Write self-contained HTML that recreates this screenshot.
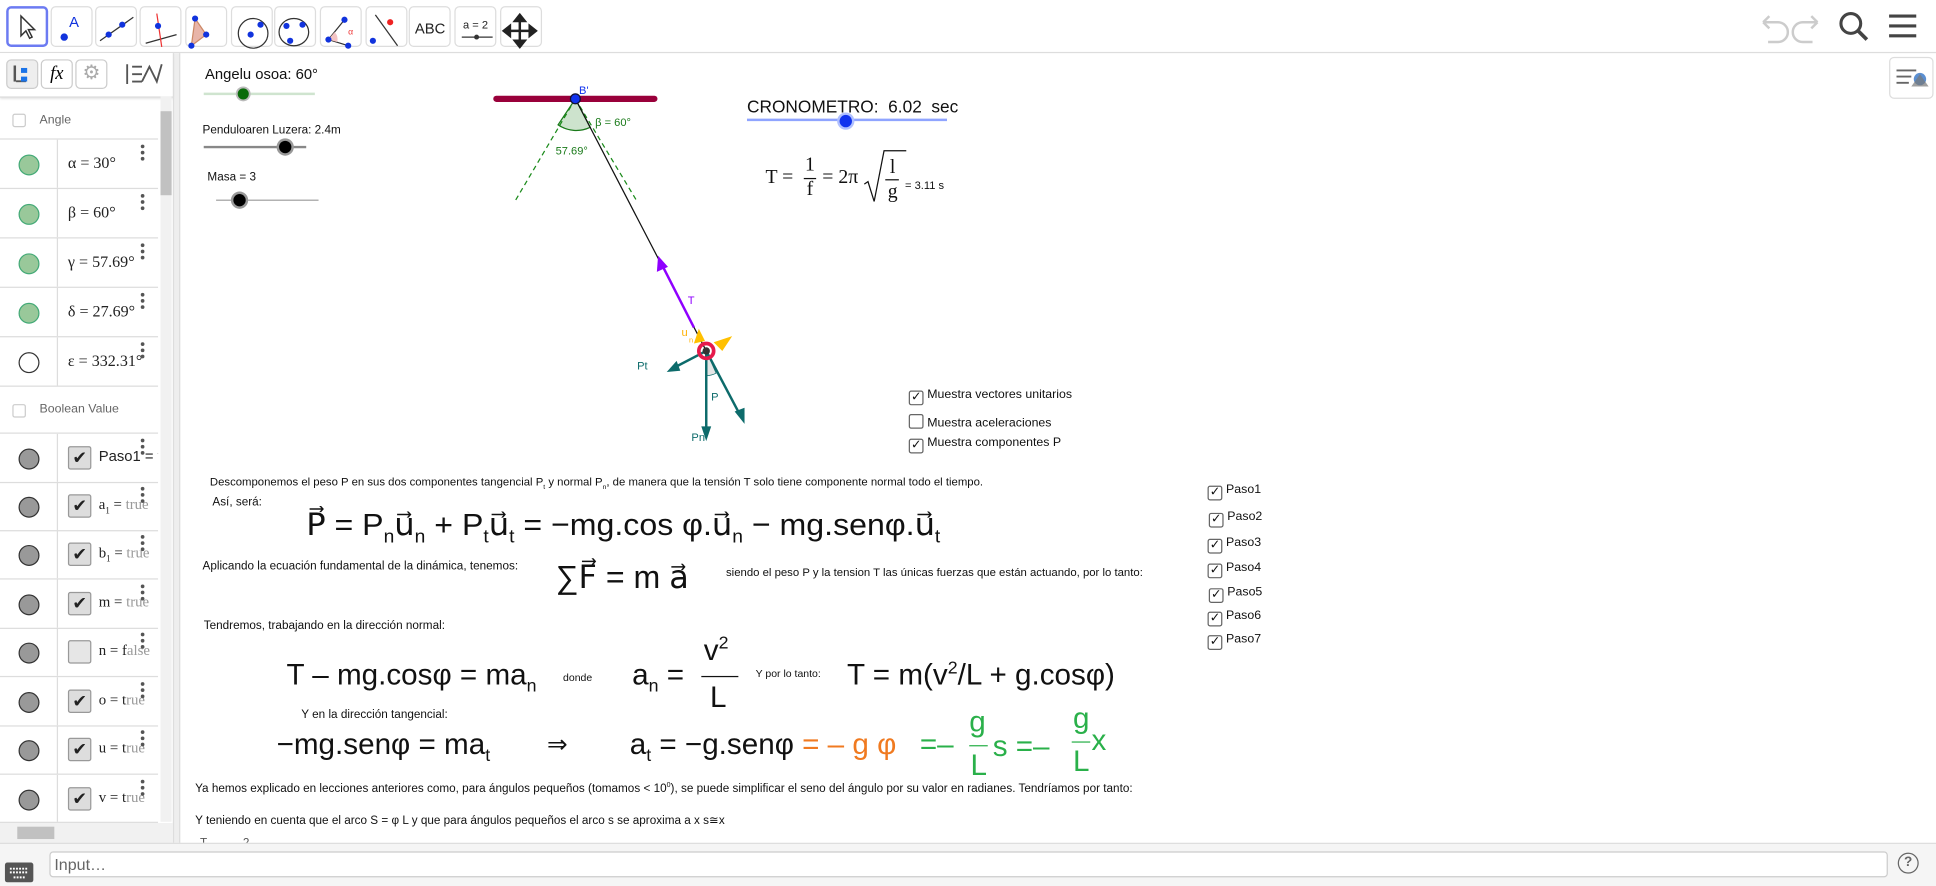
<!DOCTYPE html>
<html><head><meta charset="utf-8"><style>
html,body{margin:0;padding:0;width:1936px;height:886px;overflow:hidden;background:#fff;font-family:"Liberation Sans",Arial,sans-serif}
#w{position:absolute;left:0;top:0;width:1568px;height:717px;transform:scale(1.2347,1.2357);transform-origin:0 0;overflow:hidden}
.a{position:absolute;white-space:nowrap}
.tb{position:absolute;top:5px;width:32px;height:31px;border:1px solid #ddd;border-radius:4px;background:#fff}
.row{position:absolute;left:0;width:128px;height:39px;border-bottom:1px solid #ddd;overflow:hidden}
.row .c{position:absolute;left:46px;top:0;height:39px;border-left:1px solid #ddd}
.dot{position:absolute;left:15px;top:12px;width:15px;height:15px;border-radius:50%;border:1px solid #333}
.lbl{position:absolute;left:55px;top:11px;font-size:13px;font-family:"Liberation Serif",serif;color:#222;white-space:nowrap}
.kb{position:absolute;left:55px;top:10px;width:17px;height:17px;border:1px solid #999;border-radius:2px;background:#ddd;font-size:14px;line-height:17px;text-align:center;color:#222}
.mn{position:absolute;left:114px;top:4px;width:3px;font-size:0}
.mn i{display:block;width:3px;height:3px;border-radius:50%;background:#555;margin-bottom:2px}
.cb{display:inline-block;width:10px;height:10px;border:1px solid #666;border-radius:2px;vertical-align:-2px;margin-right:3px;font-size:10px;line-height:10px;text-align:center}
.s{font-size:9.5px;color:#111}
.big{font-size:24px;color:#111;line-height:30px}
sub{font-size:60%;line-height:0}
sup{line-height:0}
</style></head><body><div id="w">
<!-- toolbar -->
<div class="a" style="left:0;top:0;width:1568px;height:42px;background:#fff;border-bottom:1px solid #ddd"></div>
<div class="tb" style="left:5px;border:2px solid #6c7bf2;width:30px;height:29px"></div>
<div class="tb" style="left:41px"></div><div class="tb" style="left:77px"></div><div class="tb" style="left:113px"></div>
<div class="tb" style="left:150px"></div><div class="tb" style="left:187px"></div><div class="tb" style="left:222px"></div>
<div class="tb" style="left:259px"></div><div class="tb" style="left:296px"></div><div class="tb" style="left:331px"></div>
<div class="tb" style="left:368px"></div><div class="tb" style="left:405px"></div>
<svg class="a" style="left:0;top:0" width="440" height="42">
<path d="M17 13 L17 29 L21 25 L24 31 L26 30 L23 24 L28 24 Z" fill="#fff" stroke="#333" stroke-width="1.2"/>
<circle cx="52" cy="30" r="3" fill="#1133dd"/><text x="56" y="22" font-size="12" fill="#1133dd" font-family="Liberation Sans">A</text>
<line x1="81" y1="33" x2="108" y2="14" stroke="#333"/><circle cx="88" cy="28" r="2.5" fill="#1133dd"/><circle cx="99" cy="20" r="2.5" fill="#1133dd"/>
<line x1="118" y1="35" x2="143" y2="28" stroke="#333"/><line x1="127" y1="11" x2="131" y2="38" stroke="#e33"/><circle cx="128" cy="21" r="2.5" fill="#1133dd"/>
<path d="M158 15 L167 28 L155 37 Z" fill="#e8b4a8" stroke="#c86"/><circle cx="158" cy="15" r="2.5" fill="#1133dd"/><circle cx="167" cy="28" r="2.5" fill="#1133dd"/><circle cx="155" cy="37" r="2.5" fill="#1133dd"/>
<circle cx="205" cy="27" r="12" fill="none" stroke="#333"/><circle cx="203" cy="28" r="2.5" fill="#1133dd"/><circle cx="211" cy="20" r="2.5" fill="#1133dd"/>
<ellipse cx="238" cy="26" rx="12" ry="11" fill="none" stroke="#333"/><circle cx="232" cy="21" r="2.5" fill="#1133dd"/><circle cx="245" cy="20" r="2.5" fill="#1133dd"/><circle cx="235" cy="33" r="2.5" fill="#1133dd"/>
<path d="M266 32 L279 16 M266 32 L282 37" stroke="#333" fill="none"/><path d="M266 32 L271 26 A8 8 0 0 1 273 34 Z" fill="#f4c4c4"/><circle cx="266" cy="32" r="2.5" fill="#1133dd"/><circle cx="279" cy="16" r="2.5" fill="#1133dd"/><circle cx="282" cy="37" r="2.5" fill="#1133dd"/><text x="282" y="28" font-size="7" fill="#e33">α</text>
<line x1="304" y1="12" x2="322" y2="37" stroke="#333"/><circle cx="302" cy="33" r="2.5" fill="#1133dd"/><circle cx="316" cy="18" r="2.5" fill="#e22"/>
<text x="336" y="27" font-size="12" fill="#222" font-family="Liberation Sans">ABC</text>
<text x="375" y="23" font-size="9" fill="#222" font-family="Liberation Sans">a = 2</text><line x1="374" y1="30" x2="399" y2="30" stroke="#333"/><circle cx="386" cy="30" r="2" fill="#333"/>
<path d="M421 12 V38 M408 25 H434 M421 12 l-4 5 h8 Z M421 38 l-4 -5 h8 Z M408 25 l5 -4 v8 Z M434 25 l-5 -4 v8 Z" stroke="#222" stroke-width="2" fill="#222"/>
</svg>
<svg class="a" style="left:1420px;top:5px" width="148" height="34">
<path d="M8 13 H20 A8 8 0 0 1 20 29 H12 M8 13 l5 -5 M8 13 l5 5" stroke="#ccc" stroke-width="2" fill="none"/>
<path d="M52 13 H40 A8 8 0 0 0 40 29 H48 M52 13 l-5 -5 M52 13 l-5 5" stroke="#ccc" stroke-width="2" fill="none"/>
<circle cx="79" cy="14" r="8" fill="none" stroke="#444" stroke-width="2.5"/><line x1="85" y1="20" x2="92" y2="27" stroke="#444" stroke-width="3"/>
<path d="M110 8 H132 M110 16 H132 M110 24 H132" stroke="#444" stroke-width="2.5"/>
</svg>
<!-- left algebra panel -->
<div class="a" style="left:0;top:43px;width:146px;height:640px;background:#fff"></div>
<div class="a" style="left:140px;top:43px;width:5px;height:640px;background:#eee;border-left:1px solid #ddd"></div>
<div class="a" style="left:145px;top:43px;width:1px;height:640px;background:#ddd"></div>
<div class="a" style="left:0;top:43px;width:140px;height:35px;border-bottom:1px solid #ddd;box-shadow:0 1px 2px #ddd"></div>
<div class="a" style="left:5px;top:48px;width:24px;height:22px;border:1px solid #ccc;border-radius:4px;background:#eee"></div>
<div class="a" style="left:33px;top:48px;width:24px;height:22px;border:1px solid #ccc;border-radius:4px;font-family:'Liberation Serif';font-style:italic;font-size:15px;text-align:center;line-height:22px">fx</div>
<div class="a" style="left:61px;top:48px;width:24px;height:22px;border:1px solid #ccc;border-radius:4px;color:#aaa;text-align:center;font-size:16px;line-height:22px">⚙</div>
<svg class="a" style="left:5px;top:48px" width="140" height="24"><rect x="6" y="5" width="2" height="13" fill="#555"/><rect x="8" y="17" width="8" height="1.5" fill="#555"/><rect x="12" y="7" width="5" height="4" fill="#1a73e8"/><rect x="12" y="14" width="5" height="4" fill="#1a73e8"/>
<path d="M98 4 V20 M102 6 H110 M102 12 H110 M102 18 H110 M110 18 L116 6 L122 18 L126 4" stroke="#555" stroke-width="1.5" fill="none"/></svg>
<div class="a" style="left:130px;top:78px;width:9px;height:587px;background:#f1f1f1"></div>
<div class="a" style="left:130px;top:90px;width:9px;height:68px;background:#c1c1c1"></div>
<div class="a" style="left:0;top:666px;width:140px;height:17px;background:#f1f1f1"></div>
<div class="a" style="left:14px;top:669px;width:30px;height:10px;background:#c1c1c1"></div>
<div class="a" style="left:10px;top:92px;width:9px;height:9px;border:1px solid #ccc;border-radius:2px"></div>
<div class="a" style="left:32px;top:92px;font-size:10px;color:#666">Angle</div>
<div class="a" style="left:0;top:112px;width:128px;border-top:1px solid #ddd"></div>
<div class="row" style="top:113px"><div class="c"></div><div class="dot" style="background:#99c89a;border-color:#4a7"></div><div class="lbl">α = 30°</div><div class="mn"><i></i><i></i><i></i></div></div>
<div class="row" style="top:153px"><div class="c"></div><div class="dot" style="background:#99c89a;border-color:#4a7"></div><div class="lbl">β = 60°</div><div class="mn"><i></i><i></i><i></i></div></div>
<div class="row" style="top:193px"><div class="c"></div><div class="dot" style="background:#99c89a;border-color:#4a7"></div><div class="lbl">γ = 57.69°</div><div class="mn"><i></i><i></i><i></i></div></div>
<div class="row" style="top:233px"><div class="c"></div><div class="dot" style="background:#99c89a;border-color:#4a7"></div><div class="lbl">δ = 27.69°</div><div class="mn"><i></i><i></i><i></i></div></div>
<div class="row" style="top:273px"><div class="c"></div><div class="dot" style="background:#fff"></div><div class="lbl">ε = 332.31°</div><div class="mn"><i></i><i></i><i></i></div></div>
<div class="a" style="left:10px;top:327px;width:9px;height:9px;border:1px solid #ccc;border-radius:2px"></div>
<div class="a" style="left:32px;top:326px;font-size:10px;color:#666">Boolean Value</div>
<div class="a" style="left:0;top:350px;width:128px;border-top:1px solid #ddd"></div>
<div class="row" style="top:351px"><div class="c"></div><div class="dot" style="background:#999"></div><div class="kb">✔</div><div class="lbl" style="left:80px;font-family:'Liberation Sans';font-size:12px">Paso1 = t</div><div class="mn"><i></i><i></i><i></i></div></div>
<div class="row" style="top:390px"><div class="c"></div><div class="dot" style="background:#999"></div><div class="kb">✔</div><div class="lbl" style="left:80px;font-size:12px">a<sub>1</sub> = <span style="color:#999">true</span></div><div class="mn"><i></i><i></i><i></i></div></div>
<div class="row" style="top:429px"><div class="c"></div><div class="dot" style="background:#999"></div><div class="kb">✔</div><div class="lbl" style="left:80px;font-size:12px">b<sub>1</sub> = <span style="color:#999">true</span></div><div class="mn"><i></i><i></i><i></i></div></div>
<div class="row" style="top:469px"><div class="c"></div><div class="dot" style="background:#999"></div><div class="kb">✔</div><div class="lbl" style="left:80px;font-size:12px">m = <span style="color:#999">true</span></div><div class="mn"><i></i><i></i><i></i></div></div>
<div class="row" style="top:508px"><div class="c"></div><div class="dot" style="background:#999"></div><div class="kb" style="background:#e6e6e6;color:transparent">✔</div><div class="lbl" style="left:80px;font-size:12px">n = f<span style="color:#999">alse</span></div><div class="mn"><i></i><i></i><i></i></div></div>
<div class="row" style="top:548px"><div class="c"></div><div class="dot" style="background:#999"></div><div class="kb">✔</div><div class="lbl" style="left:80px;font-size:12px">o = t<span style="color:#999">rue</span></div><div class="mn"><i></i><i></i><i></i></div></div>
<div class="row" style="top:587px"><div class="c"></div><div class="dot" style="background:#999"></div><div class="kb">✔</div><div class="lbl" style="left:80px;font-size:12px">u = t<span style="color:#999">rue</span></div><div class="mn"><i></i><i></i><i></i></div></div>
<div class="row" style="top:627px;height:38px"><div class="c"></div><div class="dot" style="background:#999"></div><div class="kb">✔</div><div class="lbl" style="left:80px;font-size:12px">v = t<span style="color:#999">rue</span></div><div class="mn"><i></i><i></i><i></i></div></div>
<!-- right stylebar -->
<div class="a" style="left:1530px;top:46px;width:34px;height:32px;border:1px solid #ddd;border-radius:4px;background:#fff"></div>
<svg class="a" style="left:1532px;top:50px" width="32" height="26"><path d="M4 7 H20 M4 12 H16 M4 17 H14" stroke="#666" stroke-width="1.5"/><circle cx="23" cy="14" r="5" fill="#5b8fd1"/><path d="M16 20 L23 10 L30 20 Z" fill="#777" opacity=".7"/></svg>
<!-- graphics drawings -->
<svg class="a" style="left:0;top:0" width="1568" height="717">
<line x1="165" y1="76" x2="255" y2="76" stroke="#cfe4cf" stroke-width="2"/><circle cx="197" cy="76" r="6" fill="#bbb"/><circle cx="197" cy="76" r="4.5" fill="#0a6b0a"/>
<line x1="165" y1="119" x2="248" y2="119" stroke="#888" stroke-width="2"/><circle cx="231" cy="119" r="7" fill="#999"/><circle cx="231" cy="119" r="5" fill="#000"/>
<line x1="175" y1="162" x2="258" y2="162" stroke="#999" stroke-width="1"/><circle cx="194" cy="162" r="7" fill="#999"/><circle cx="194" cy="162" r="5" fill="#000"/>
<line x1="402" y1="80" x2="530" y2="80" stroke="#99003a" stroke-width="5" stroke-linecap="round"/>
<path d="M466 80 L452 101 A26 26 0 0 0 478 103 Z" fill="#cde3cd" stroke="#1a7a1a" stroke-width="1"/>
<line x1="466" y1="80" x2="417" y2="163" stroke="#1a8a1a" stroke-dasharray="4,3"/>
<line x1="466" y1="80" x2="516" y2="163" stroke="#1a8a1a" stroke-dasharray="4,3"/>
<line x1="466" y1="80" x2="572" y2="284" stroke="#111" stroke-width="1"/>
<circle cx="466" cy="80" r="4" fill="#1133ee" stroke="#113" stroke-width="1"/>
<text x="469" y="76" font-size="9" fill="#1133ee" font-family="Liberation Sans">B'</text>
<text x="482" y="102" font-size="9" fill="#1a7a1a" font-family="Liberation Sans">β = 60°</text>
<text x="450" y="125" font-size="9" fill="#1a7a1a" font-family="Liberation Sans">57.69°</text>
<line x1="562" y1="265" x2="536" y2="214" stroke="#8f00ff" stroke-width="2"/><path d="M533 207 L532 220 L541 216 Z" fill="#8f00ff"/>
<text x="557" y="246" font-size="9" fill="#8f00ff" font-family="Liberation Sans">T</text>
<path d="M566 266 L562 278 L571 276 Z" fill="#ffc000"/><path d="M593 272 L578 277 L585 284 Z" fill="#ffc000"/>
<text x="552" y="272" font-size="9" fill="#ffb000" font-family="Liberation Sans">u</text><text x="558" y="277" font-size="6" fill="#ffb000">n</text>
<line x1="572" y1="284" x2="547" y2="297" stroke="#0d6b6b" stroke-width="2"/><path d="M540 301 L548 292 L551 300 Z" fill="#0d6b6b"/>
<path d="M572 284 L572 304 A18 18 0 0 0 580 302 Z" fill="#e6e6e6" stroke="#0d6b6b" stroke-width=".6"/>
<line x1="572" y1="284" x2="572" y2="350" stroke="#0d6b6b" stroke-width="2"/><path d="M572 357 L568 345 L576 345 Z" fill="#0d6b6b"/>
<line x1="572" y1="284" x2="600" y2="337" stroke="#0d6b6b" stroke-width="2"/><path d="M603 343 L595 333 L603 330 Z" fill="#0d6b6b"/>
<circle cx="572" cy="284" r="6" fill="none" stroke="#e6194b" stroke-width="3"/><circle cx="572" cy="284" r="3" fill="#333"/>
<text x="516" y="299" font-size="9" fill="#0d6b6b" font-family="Liberation Sans">Pt</text>
<text x="576" y="324" font-size="9" fill="#0d6b6b" font-family="Liberation Sans">P</text>
<text x="560" y="357" font-size="9" fill="#0d6b6b" font-family="Liberation Sans">Pn</text>
<line x1="605" y1="97" x2="767" y2="97" stroke="#8fa4ff" stroke-width="2"/><circle cx="685" cy="98" r="7" fill="#b0c0ff"/><circle cx="685" cy="98" r="5" fill="#1133ee"/>
</svg>
<div class="a" style="left:166px;top:53px;font-size:12px;color:#111">Angelu osoa: 60°</div>
<div class="a" style="left:164px;top:100px;font-size:9.5px;color:#111">Penduloaren Luzera: 2.4m</div>
<div class="a" style="left:168px;top:138px;font-size:9.5px;color:#111">Masa = 3</div>
<div class="a" style="left:605px;top:78px;font-size:14px;color:#111">CRONOMETRO:&nbsp; 6.02&nbsp; sec</div>
<div class="a" style="left:620px;top:124px;font-size:16px;font-family:'Liberation Serif',serif;color:#111;line-height:20px">
<span style="position:absolute;left:0;top:10px">T =</span>
<span style="position:absolute;left:32px;top:0;text-align:center;width:8px">1<br>f</span><span style="position:absolute;left:31px;top:20px;width:10px;border-top:1px solid #111"></span>
<span style="position:absolute;left:46px;top:10px">= 2π</span>
<svg style="position:absolute;left:78px;top:-5px" width="40" height="48"><path d="M2 30 L5 28 L10 44 L18 3 H36" stroke="#111" fill="none"/></svg>
<span style="position:absolute;left:98px;top:2px;text-align:center;width:10px">l<br>g</span><span style="position:absolute;left:97px;top:21px;width:11px;border-top:1px solid #111"></span>
<span style="position:absolute;left:113px;top:16px;font-size:9px;font-family:'Liberation Sans'">= 3.11 s</span></div>
<div class="a s" style="left:736px;top:314px;font-size:10px"><span class="cb">✓</span>Muestra vectores unitarios</div>
<div class="a s" style="left:736px;top:335px;font-size:10px"><span class="cb"></span>Muestra aceleraciones</div>
<div class="a s" style="left:736px;top:353px;font-size:10px"><span class="cb">✓</span>Muestra componentes P</div>
<div class="a s" style="left:978px;top:391px;font-size:10px"><span class="cb">✓</span>Paso1</div>
<div class="a s" style="left:979px;top:413px;font-size:10px"><span class="cb">✓</span>Paso2</div>
<div class="a s" style="left:978px;top:434px;font-size:10px"><span class="cb">✓</span>Paso3</div>
<div class="a s" style="left:978px;top:454px;font-size:10px"><span class="cb">✓</span>Paso4</div>
<div class="a s" style="left:979px;top:474px;font-size:10px"><span class="cb">✓</span>Paso5</div>
<div class="a s" style="left:978px;top:493px;font-size:10px"><span class="cb">✓</span>Paso6</div>
<div class="a s" style="left:978px;top:512px;font-size:10px"><span class="cb">✓</span>Paso7</div>
<div class="a s" style="left:170px;top:385px;font-size:9.2px">Descomponemos el peso P en sus dos componentes tangencial P<sub>t</sub> y normal P<sub>n</sub>, de manera que la tensión T solo tiene componente normal todo el tiempo.</div>
<div class="a s" style="left:172px;top:401px">Así, será:</div>
<div class="a" style="left:248px;top:410px;font-size:25px;color:#111;line-height:30px;transform:scaleX(1.04);transform-origin:0 0">P⃗ = P<sub>n</sub>u⃗<sub>n</sub> + P<sub>t</sub>u⃗<sub>t</sub> = −mg.cos φ.u⃗<sub>n</sub> − mg.senφ.u⃗<sub>t</sub></div>
<div class="a s" style="left:164px;top:453px">Aplicando la ecuación fundamental de la dinámica, tenemos:</div>
<div class="a" style="left:450px;top:452px;font-size:26px;color:#111">∑F⃗ = m a⃗</div>
<div class="a s" style="left:588px;top:458px;font-size:9.2px">siendo el peso P y la tension T las únicas fuerzas que están actuando, por lo tanto:</div>
<div class="a s" style="left:165px;top:501px">Tendremos, trabajando en la dirección normal:</div>
<div class="a big" style="left:232px;top:532px">T – mg.cosφ = ma<sub>n</sub></div>
<div class="a s" style="left:456px;top:543px;font-size:8.5px">donde</div>
<div class="a big" style="left:512px;top:532px">a<sub>n</sub> =</div>
<div class="a big" style="left:570px;top:512px">v<sup style="font-size:60%">2</sup></div>
<div class="a" style="left:568px;top:547px;width:30px;border-top:1px solid #111"></div>
<div class="a big" style="left:575px;top:550px">L</div>
<div class="a s" style="left:612px;top:540px;font-size:8.5px">Y por lo tanto:</div>
<div class="a big" style="left:686px;top:532px">T = m(v<sup style="font-size:60%">2</sup>/L + g.cosφ)</div>
<div class="a s" style="left:244px;top:573px">Y en la dirección tangencial:</div>
<div class="a big" style="left:224px;top:588px">−mg.senφ = ma<sub>t</sub></div>
<div class="a" style="left:443px;top:590px;font-size:20px;font-family:'DejaVu Sans';color:#111">⇒</div>
<div class="a big" style="left:510px;top:588px">a<sub>t</sub> = −g.senφ<span style="color:#f07a20"> = – g φ</span></div>
<div class="a big" style="left:745px;top:588px;color:#2ab04a">=–</div>
<div class="a big" style="left:785px;top:570px;color:#2ab04a">g</div>
<div class="a" style="left:785px;top:603px;width:15px;border-top:1px solid #2ab04a"></div>
<div class="a big" style="left:786px;top:605px;color:#2ab04a">L</div>
<div class="a big" style="left:804px;top:590px;color:#2ab04a">s =–</div>
<div class="a big" style="left:869px;top:567px;color:#2ab04a">g</div>
<div class="a" style="left:868px;top:600px;width:15px;border-top:1px solid #2ab04a"></div>
<div class="a big" style="left:869px;top:602px;color:#2ab04a">L</div>
<div class="a big" style="left:884px;top:585px;color:#2ab04a">x</div>
<div class="a s" style="left:158px;top:633px">Ya hemos explicado en lecciones anteriores como, para ángulos pequeños (tomamos &lt; 10<sup style="font-size:60%">0</sup>), se puede simplificar el seno del ángulo por su valor en radianes. Tendríamos por tanto:</div>
<div class="a s" style="left:158px;top:659px">Y teniendo en cuenta que el arco S = φ L y que para ángulos pequeños el arco s se aproxima a x s≅x</div>
<div class="a s" style="left:162px;top:677px;color:#555">T  ,        ,         .                        ,                                 ,           2</div>
<!-- bottom input bar -->
<div class="a" style="left:0;top:682px;width:1568px;height:35px;background:#f5f5f5;border-top:1px solid #ddd"></div>
<div class="a" style="left:40px;top:689px;width:1484px;height:19px;background:#fff;border:1px solid #ccc;border-radius:3px;font-size:13px;color:#666;line-height:19px;padding-left:3px">Input…</div>
<div class="a" style="left:4px;top:698px;width:23px;height:16px;background:#555;border-radius:2px"></div>
<svg class="a" style="left:4px;top:698px" width="23" height="16"><path d="M4 5 H19 M4 8 H19 M7 12 H16" stroke="#fff" stroke-width="1.6" stroke-dasharray="1.5,1"/></svg>
<div class="a" style="left:1537px;top:690px;width:15px;height:15px;border:1.5px solid #666;border-radius:50%;font-size:11px;text-align:center;line-height:15px;color:#666;font-weight:bold">?</div>
</div></body></html>
